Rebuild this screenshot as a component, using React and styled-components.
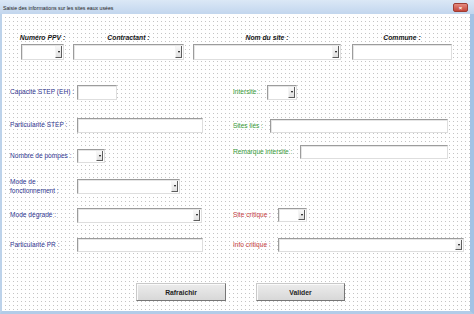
import React from "react";
import styled, { createGlobalStyle } from "styled-components";

const Global = createGlobalStyle`
  html, body { margin: 0; padding: 0; width: 474px; height: 314px; overflow: hidden; background: #fff; }
  * { box-sizing: border-box; }
  body { font-family: "Liberation Sans", Arial, sans-serif; }
`;

const Window = styled.div`
  width: 474px;
  height: 314px;
  display: flex;
  flex-direction: column;
`;

const TitleBar = styled.div`
  height: 14px;
  flex: none;
  display: flex;
  align-items: center;
  justify-content: space-between;
  padding: 1px 6px 0 3px;
  background: linear-gradient(#dbe8f6, #c2d6ee);
`;

const Title = styled.span`
  font-size: 5.2px;
  color: #222;
`;

const CloseBtn = styled.div`
  width: 15px;
  height: 9px;
  border-radius: 2px;
  background: linear-gradient(#e58a7e, #c4473b);
  border: 1px solid #9e3d34;
  display: flex;
  align-items: center;
  justify-content: center;
  color: #fff;
  font-size: 6px;
  font-weight: bold;
  line-height: 1;
`;

const Body = styled.div`
  flex: 1;
  border-left: 2px solid #bcd2ea;
  border-right: 4px solid #a3c3e5;
  border-bottom: 3px solid #b2cce8;
  background-color: #fff;
  background-image: linear-gradient(to right, #fff 3px, transparent 3px),
    linear-gradient(to bottom, #fff 3px, #c4c4c4 3px);
  background-size: 4px 4px;
  display: flex;
  flex-direction: column;
`;

const HeaderGrid = styled.div`
  display: grid;
  grid-template-columns: 43px 111px 150px 100px;
  column-gap: 9px;
  padding: 20px 0 0 19px;
`;

const HeaderCell = styled.div`
  display: flex;
  flex-direction: column;
  align-items: center;
  width: ${(p) => p.$w}px;
  gap: 2px;
`;

const HeaderLabel = styled.span`
  font-size: 6.8px;
  font-weight: bold;
  font-style: italic;
  color: #151515;
  line-height: 8px;
  white-space: nowrap;
`;

const Form = styled.div`
  display: flex;
  flex-direction: column;
  padding: 25px 0 0 8px;
`;

const Row = styled.div`
  display: grid;
  grid-template-columns: 223px 1fr;
  align-items: start;
  height: ${(p) => p.$h}px;
`;

const Pair = styled.div`
  display: flex;
  align-items: center;
  margin-top: ${(p) => p.$shift || 0}px;
`;

const Label = styled.span`
  flex: none;
  width: ${(p) => p.$w}px;
  font-size: 6.6px;
  line-height: 8.5px;
  color: ${(p) => p.$color};
`;

const colors = {
  blue: "#2f3590",
  green: "#379a37",
  red: "#c63e42",
};

const Field = styled.div`
  flex: none;
  position: relative;
  width: ${(p) => p.$w}px;
  height: ${(p) => p.$h || 15}px;
  background: #fff;
  border: 1px solid #9c9c9c;
  border-right-color: #dedede;
  border-bottom-color: #dedede;
  box-shadow: inset 1px 1px 0 #e6e6e6;
`;

const Arrow = styled.div`
  position: absolute;
  top: 1px;
  right: 1px;
  bottom: 1px;
  width: 7px;
  background: linear-gradient(#fafafa, #e0e0e0);
  border-right: 1px solid #5e5e5e;
  border-bottom: 1px solid #5e5e5e;
  border-left: 1px solid #f5f5f5;
  display: flex;
  align-items: center;
  justify-content: center;
  &::after {
    content: "";
    border-left: 1.5px solid transparent;
    border-right: 1.5px solid transparent;
    border-top: 2px solid #000;
  }
`;

const Combo = ({ w, h }) => (
  <Field $w={w} $h={h}>
    <Arrow />
  </Field>
);

const ButtonRow = styled.div`
  display: flex;
  gap: 30px;
  padding: 31px 0 0 134px;
`;

const Button = styled.div`
  width: ${(p) => p.$w}px;
  height: 18px;
  display: flex;
  align-items: center;
  justify-content: center;
  background: linear-gradient(#ececec, #d8d8d8);
  border: 1px solid #c9c9c9;
  border-right-color: #767676;
  border-bottom-color: #767676;
  box-shadow: inset 1px 1px 0 #fafafa;
  font-size: 6.8px;
  font-weight: bold;
  color: #1e1e1e;
`;

export default function App() {
  return (
    <Window>
      <Global />
      <TitleBar>
        <Title>Saisie des informations sur les sites eaux usées</Title>
        <CloseBtn>×</CloseBtn>
      </TitleBar>
      <Body>
        <HeaderGrid>
          <HeaderCell $w={43}>
            <HeaderLabel>Numéro PPV :</HeaderLabel>
            <Combo w={43} h={16} />
          </HeaderCell>
          <HeaderCell $w={111}>
            <HeaderLabel>Contractant :</HeaderLabel>
            <Combo w={111} h={16} />
          </HeaderCell>
          <HeaderCell $w={148}>
            <HeaderLabel>Nom du site :</HeaderLabel>
            <Combo w={148} h={16} />
          </HeaderCell>
          <HeaderCell $w={100}>
            <HeaderLabel>Commune :</HeaderLabel>
            <Field $w={100} $h={16} />
          </HeaderCell>
        </HeaderGrid>

        <Form>
          <Row $h={33}>
            <Pair>
              <Label $w={67} $color={colors.blue}>Capacité STEP (EH) :</Label>
              <Field $w={40} />
            </Pair>
            <Pair>
              <Label $w={34} $color={colors.green}>Intersite :</Label>
              <Combo w={30} />
            </Pair>
          </Row>
          <Row $h={31}>
            <Pair>
              <Label $w={67} $color={colors.blue}>Particularité STEP :</Label>
              <Field $w={126} />
            </Pair>
            <Pair $shift={1}>
              <Label $w={37} $color={colors.green}>Sites liés :</Label>
              <Field $w={178} $h={14} />
            </Pair>
          </Row>
          <Row $h={29}>
            <Pair>
              <Label $w={67} $color={colors.blue}>Nombre de pompes :</Label>
              <Combo w={28} h={14} />
            </Pair>
            <Pair $shift={-4}>
              <Label $w={67} $color={colors.green}>Remarque intersite :</Label>
              <Field $w={148} $h={14} />
            </Pair>
          </Row>
          <Row $h={30}>
            <Pair>
              <Label $w={67} $color={colors.blue}>
                Mode de
                <br />
                fonctionnement :
              </Label>
              <Combo w={103} />
            </Pair>
            <div />
          </Row>
          <Row $h={30}>
            <Pair>
              <Label $w={67} $color={colors.blue}>Mode dégradé :</Label>
              <Combo w={125} />
            </Pair>
            <Pair>
              <Label $w={45} $color={colors.red}>Site critique :</Label>
              <Combo w={29} h={14} />
            </Pair>
          </Row>
          <Row $h={14}>
            <Pair>
              <Label $w={67} $color={colors.blue}>Particularité PR :</Label>
              <Field $w={126} $h={14} />
            </Pair>
            <Pair>
              <Label $w={45} $color={colors.red}>Info critique :</Label>
              <Combo w={186} h={14} />
            </Pair>
          </Row>
        </Form>

        <ButtonRow>
          <Button $w={90}>Rafraichir</Button>
          <Button $w={89}>Valider</Button>
        </ButtonRow>
      </Body>
    </Window>
  );
}
